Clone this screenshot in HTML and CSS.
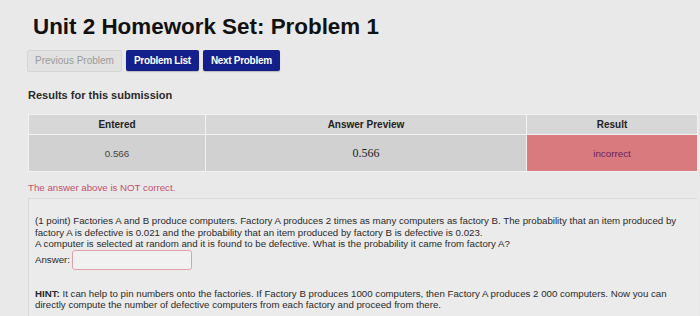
FILE: index.html
```html
<!DOCTYPE html>
<html>
<head>
<meta charset="utf-8">
<link rel="stylesheet" href="styles.css">
</head>
<body>
<div class="page">
  <h1 class="title">Unit 2 Homework Set: Problem 1</h1>
  <div class="nav">
    <span class="btn btn-disabled">Previous Problem</span>
    <span class="btn btn-primary">Problem List</span>
    <span class="btn btn-primary">Next Problem</span>
  </div>
  <div class="results-label">Results for this submission</div>
  <table class="results">
    <tr class="head">
      <th class="c1">Entered</th>
      <th class="c2">Answer Preview</th>
      <th class="c3">Result</th>
    </tr>
    <tr class="body">
      <td class="c1">0.566</td>
      <td class="c2 preview">0.566</td>
      <td class="c3 incorrect">incorrect</td>
    </tr>
  </table>
  <div class="not-correct">The answer above is NOT correct.</div>
  <div class="problem">
    <p class="statement">(1 point) Factories A and B produce computers. Factory A produces 2 times as many computers as factory B. The probability that an item produced by<br>factory A is defective is 0.021 and the probability that an item produced by factory B is defective is 0.023.<br>A computer is selected at random and it is found to be defective. What is the probability it came from factory A?</p>
    <div class="answer-row"><span class="answer-label">Answer:</span><span class="answer-input"></span></div>
    <p class="hint"><b>HINT:</b> It can help to pin numbers onto the factories. If Factory B produces 1000 computers, then Factory A produces 2 000 computers. Now you can<br>directly compute the number of defective computers from each factory and proceed from there.</p>
  </div>
</div>
</body>
</html>
```

FILE: styles.css
```css
html, body {
  margin: 0;
  padding: 0;
  background: #e9e9e9;
  font-family: "Liberation Sans", Arial, sans-serif;
  color: #1c1c1c;
  overflow: hidden;
}
.page {
  padding: 0 0 0 28px;
}
.title {
  font-size: 22.4px;
  font-weight: bold;
  margin: 0;
  padding: 14px 0 0 5px;
  line-height: 26px;
  color: #111;
}
.nav {
  display: flex;
  gap: 4px;
  margin-top: 10px;
  margin-left: -1px;
}
.btn {
  display: inline-block;
  height: 21px;
  line-height: 21px;
  padding: 0 8px;
  border-radius: 2px;
  font-size: 10px;
}
.btn-disabled {
  background: #e2e2e2;
  border: 1px solid #d6d6d6;
  color: #9a9a9a;
  height: 20px;
  line-height: 20px;
  padding: 0 7px;
}
.btn-primary {
  background: #13208c;
  color: #fff;
  font-weight: bold;
  font-size: 10px;
  letter-spacing: -0.3px;
  box-shadow: 0 1px 1px rgba(0,0,0,0.2);
}
.results-label {
  margin-top: 17px;
  font-size: 11px;
  font-weight: bold;
  color: #2a2a2a;
}
.results {
  margin-top: 13px;
  width: 670px;
  border-collapse: collapse;
  font-size: 9.8px;
}
.results th, .results td {
  border: 1px solid #f2f2f2;
  text-align: center;
  padding: 0;
}
.results .head th {
  background: #d7d7d7;
  height: 19px;
  font-weight: bold;
  font-size: 10px;
  color: #222;
}
.results .body td {
  background: #d1d1d1;
  height: 36px;
  color: #444;
}
.results .c1 { width: 176px; }
.results .c2 { width: 320px; }
.results .body .preview {
  font-family: "Liberation Serif", "Times New Roman", serif;
  font-size: 12px;
  color: #222;
}
.results .body .incorrect {
  background: #d97b7e;
  color: #6a1f63;
}
.not-correct {
  margin-top: 10px;
  font-size: 9.7px;
  color: #c2506a;
}
.problem {
  margin-top: 5px;
  width: 662px;
  background: #ebebeb;
  border: 1px solid #dadada;
  border-right: none;
  padding: 16px 0 20px 6px;
  font-size: 9.7px;
  line-height: 11.6px;
  color: #2a2a2a;
}
.statement {
  margin: 0;
}
.answer-row {
  display: flex;
  align-items: center;
  margin-top: 0;
}
.answer-label {
  margin-right: 2px;
}
.answer-input {
  display: inline-block;
  width: 118px;
  height: 18px;
  border: 1px solid #dca2a9;
  border-radius: 3px;
  background: #f1f1f1;
}
.hint {
  margin: 18px 0 0 0;
}
```
